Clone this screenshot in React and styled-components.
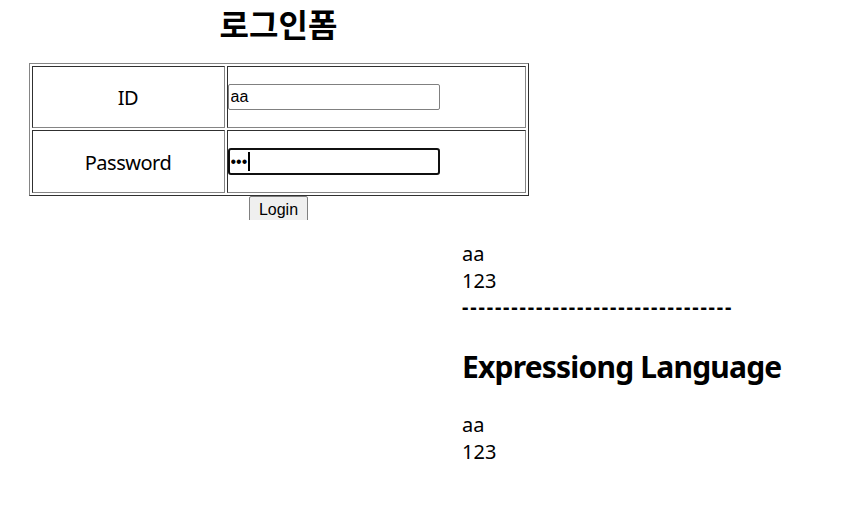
import React from "react";
import styled, { createGlobalStyle } from "styled-components";

const Global = createGlobalStyle`
  html, body { margin: 0; padding: 0; background: #fff; }
  body {
    font-family: "Noto Sans", "Noto Sans CJK KR", sans-serif;
    font-size: 20px;
    line-height: 26.5px;
    color: #000;
  }
`;

const LoginArea = styled.div`
  width: 557px;
  text-align: center;
`;

const Title = styled.h2`
  margin: 0;
  font-family: "Noto Sans CJK KR", "Noto Sans", sans-serif;
  font-size: 32px;
  line-height: normal;
  font-weight: 700;
`;

const Table = styled.table`
  margin: 17px auto 0;
  border-collapse: separate;
  border-spacing: 2px;
  border-width: 1px;
  border-style: solid;
  border-color: #858585 #303030 #303030 #858585;
`;

const Cell = styled.td`
  width: ${(p) => p.$w}px;
  height: ${(p) => p.$h}px;
  padding: ${(p) => (p.$left ? "0" : "3px 0 0")};
  box-sizing: border-box;
  border-width: 1px;
  border-style: solid;
  border-color: #303030 #858585 #858585 #303030;
  text-align: ${(p) => (p.$left ? "left" : "center")};
  vertical-align: middle;
  letter-spacing: -0.5px;
`;

const TextInput = styled.input`
  display: block;
  box-sizing: border-box;
  width: 212px;
  height: 26px;
  margin: 0;
  padding: 0 2px;
  border: 1px solid #808080;
  border-radius: 2px;
  font-family: "Liberation Sans", Arial, sans-serif;
  font-size: 16px;
  letter-spacing: 0;
  color: #000;
  background: #fff;
  outline: none;
`;

const FieldWrap = styled.div`
  position: relative;
  width: 212px;
`;

const FocusedInput = styled(TextInput)`
  height: 27px;
  border: 2px solid #101010;
  border-radius: 3px;
  padding: 0 1px;
  font-size: 16px;
`;

const Caret = styled.span`
  position: absolute;
  left: 20px;
  top: 4px;
  width: 2px;
  height: 19px;
  background: #000;
`;

const ButtonBar = styled.div`
  display: flex;
  justify-content: center;
  align-items: flex-start;
  height: 24px;
  overflow: hidden;
`;

const Button = styled.button`
  margin: 0;
  padding: 4px 9px 3px;
  border: 1px solid #808080;
  border-radius: 2px;
  background: #efefef;
  font-family: "Liberation Sans", Arial, sans-serif;
  font-size: 16px;
  line-height: 18px;
  color: #000;
`;

const Result = styled.div`
  margin-top: 21px;
  padding-left: 462px;
`;

const Line = styled.div`
  white-space: nowrap;
`;

const Dashes = styled(Line)`
  font-weight: 700;
  letter-spacing: 1.82px;
`;

const Heading = styled.h2`
  margin: 26px 0 25.6px;
  font-size: 30px;
  line-height: 40px;
  font-weight: 700;
  letter-spacing: -0.8px;
  white-space: nowrap;
`;

export default function App() {
  return (
    <>
      <Global />
      <LoginArea>
        <Title>로그인폼</Title>
        <Table>
          <tbody>
            <tr>
              <Cell $w={193} $h={62}>ID</Cell>
              <Cell $w={299} $h={62} $left>
                <TextInput type="text" defaultValue="aa" />
              </Cell>
            </tr>
            <tr>
              <Cell $w={193} $h={63}>Password</Cell>
              <Cell $w={299} $h={63} $left>
                <FieldWrap>
                  <FocusedInput type="password" defaultValue="123" />
                  <Caret />
                </FieldWrap>
              </Cell>
            </tr>
          </tbody>
        </Table>
        <ButtonBar>
          <Button type="button">Login</Button>
        </ButtonBar>
      </LoginArea>
      <Result>
        <Line>aa</Line>
        <Line>123</Line>
        <Dashes>---------------------------------</Dashes>
        <Heading>Expressiong Language</Heading>
        <Line>aa</Line>
        <Line>123</Line>
      </Result>
    </>
  );
}
